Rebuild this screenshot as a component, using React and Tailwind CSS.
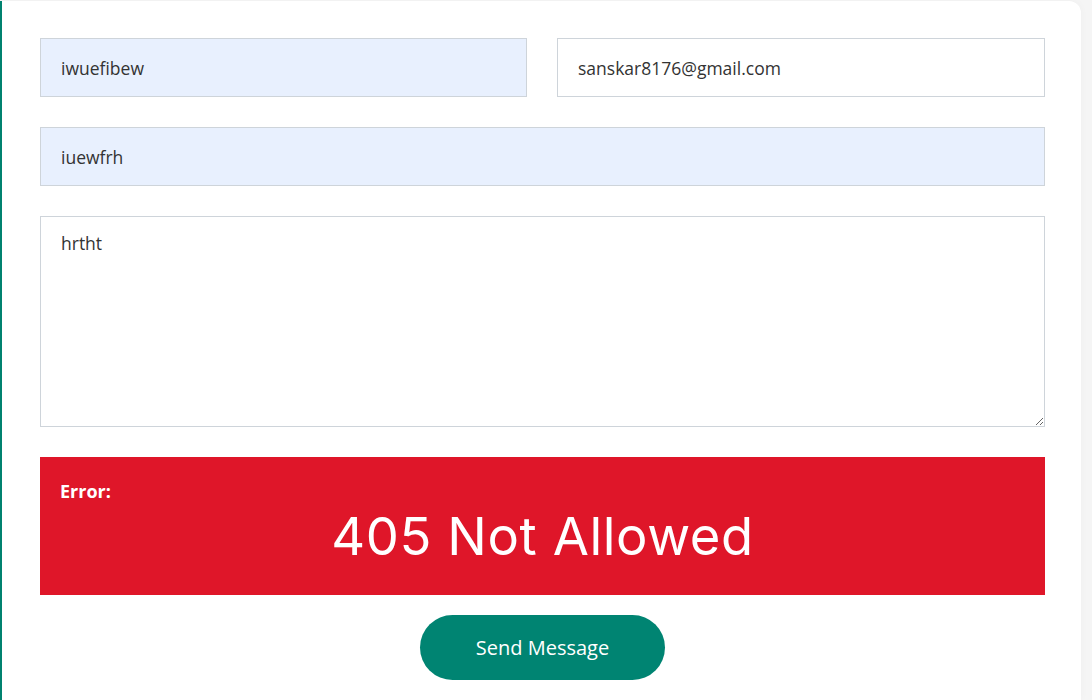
import React from 'react';

const inputBase =
  "h-[59px] w-full border border-[#ced4da] px-5 text-[17.5px] text-[#333] outline-none";

const ContactForm = () => {
  return (
    <form className="flex flex-col gap-[30px]" onSubmit={(e) => e.preventDefault()}>
      <div className="grid grid-cols-[487px_1fr] gap-[30px]">
        <input className={`${inputBase} bg-[#e8f0fe]`} defaultValue="iwuefibew" />
        <input className={`${inputBase} bg-white`} defaultValue="sanskar8176@gmail.com" />
      </div>
      <input className={`${inputBase} bg-[#e8f0fe]`} defaultValue="iuewfrh" />
      <textarea
        className="h-[211px] w-full border border-[#ced4da] bg-white px-5 py-[13px] text-[17.5px] text-[#333] outline-none"
        defaultValue="hrtht"
      />
      <div className="flex h-[138px] flex-col bg-[#df1629] px-5 pt-[25px] text-white">
        <span className="text-[18px] font-bold leading-none">Error:</span>
        <span className="mt-[10px] text-center text-[52.5px] leading-none tracking-[0.6px] [font-family:Inter,'Open_Sans',sans-serif]">
          405 Not Allowed
        </span>
      </div>
      <div className="-mt-[10px] flex justify-center">
        <button
          type="submit"
          className="h-[65px] w-[245px] rounded-full bg-[#008472] text-[20px] text-white"
        >
          Send Message
        </button>
      </div>
    </form>
  );
};

const App = () => {
  return (
    <div className="min-h-[700px] bg-[#f5f5f5] pt-px [font-family:'Open_Sans',sans-serif]">
      <div className="h-[699px] w-[1081px] rounded-tr-[12px] border-l-2 border-[#00826f] bg-white pl-[38px] pr-[36px] pt-[37px] shadow-[0_0_8px_rgba(0,0,0,0.03)]">
        <ContactForm />
      </div>
    </div>
  );
};

export default App;
